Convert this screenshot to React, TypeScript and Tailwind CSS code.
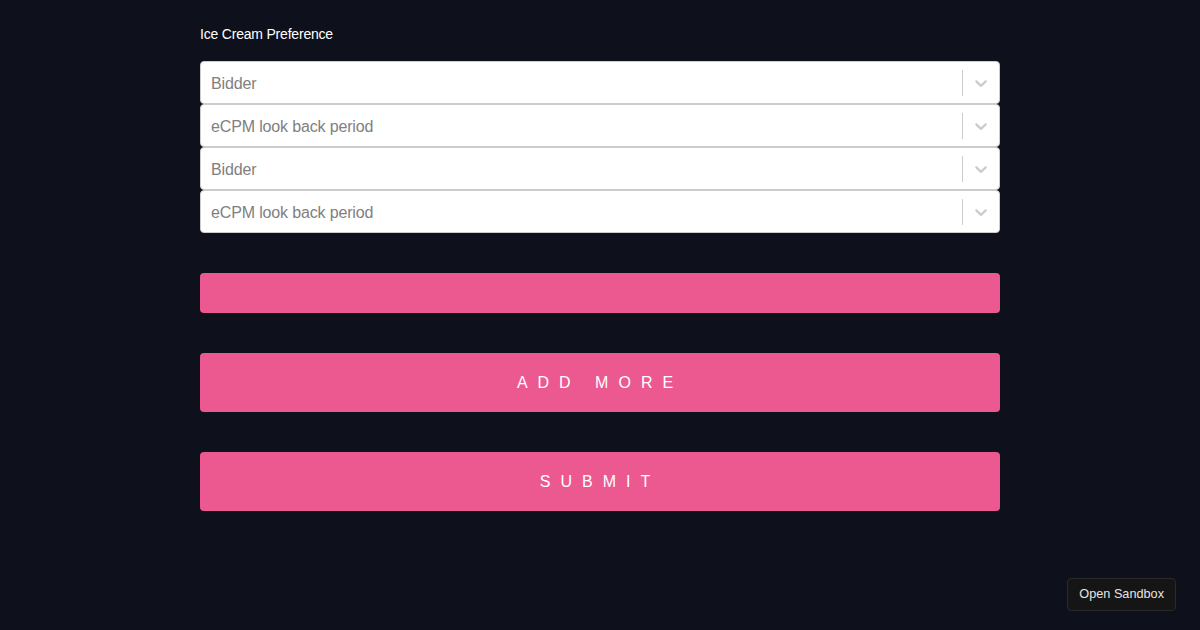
import React from 'react';

const font = { fontFamily: '"Liberation Sans", Arial, sans-serif' };

const Chevron: React.FC = () => (
  <svg height="20" width="20" viewBox="0 0 20 20" aria-hidden="true" className="fill-[#cccccc]">
    <path d="M4.516 7.548c0.436-0.446 1.043-0.481 1.576 0l3.908 3.747 3.908-3.747c0.533-0.481 1.141-0.446 1.574 0 0.436 0.445 0.408 1.197 0 1.615-0.406 0.418-4.695 4.502-4.695 4.502-0.217 0.223-0.502 0.335-0.787 0.335s-0.57-0.112-0.789-0.335c0 0-4.287-4.084-4.695-4.502s-0.436-1.17 0-1.615z" />
  </svg>
);

const SelectBox: React.FC<{ placeholder: string }> = ({ placeholder }) => (
  <div className="flex h-[43px] items-center rounded-[4px] border border-[#cccccc] bg-white">
    <div className="flex-1 px-[10px] pt-[2px] text-[16px] tracking-[-0.15px] text-[#808080]">{placeholder}</div>
    <span className="h-[26px] w-px bg-[#cccccc]" />
    <div className="flex items-center px-2 py-2">
      <Chevron />
    </div>
  </div>
);

const App: React.FC = () => {
  const rows = ['Bidder', 'eCPM look back period', 'Bidder', 'eCPM look back period'];

  return (
    <div className="relative min-h-[630px] w-full bg-[#0e101c]" style={font}>
      <div className="mx-auto w-[800px] pt-[24px]">
        {/* Label */}
        <label className="block text-[14px] font-light tracking-[-0.2px] text-white">Ice Cream Preference</label>

        {/* Selects */}
        <div className="mt-[16px] flex flex-col">
          {rows.map((r, i) => (
            <SelectBox key={i} placeholder={r} />
          ))}
        </div>

        {/* Empty bar */}
        <div className="mt-[40px] h-[40px] rounded-[4px] bg-[#ec5990]" />

        {/* Buttons */}
        <button className="mt-[40px] block h-[59px] w-full rounded-[4px] bg-[#ec5990] pt-[1px] text-[16px] uppercase tracking-[10px] text-white">
          Add More
        </button>
        <button className="mt-[40px] block h-[59px] w-full rounded-[4px] bg-[#ec5990] pt-[1px] text-[16px] uppercase tracking-[10px] text-white">
          Submit
        </button>
      </div>

      {/* Sandbox link */}
      <div className="absolute bottom-[19px] right-[24px] flex h-[33px] items-center rounded-[4px] border border-[#2a2a2a] bg-[#151515] px-[11px] text-[12.7px] text-[#e5e5e5]">
        Open Sandbox
      </div>
    </div>
  );
};

export default App;
